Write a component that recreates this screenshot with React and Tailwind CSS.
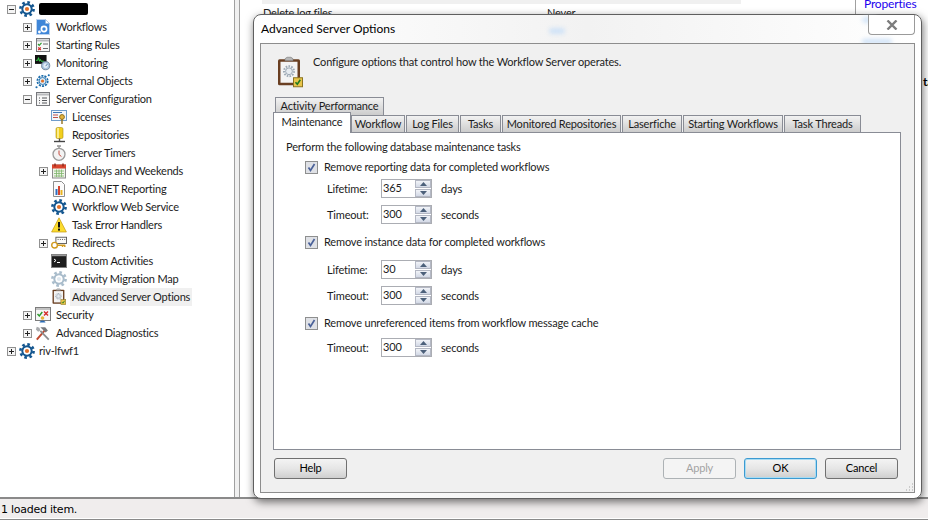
import React from "react";

const Gear = ({ size = 16, color = "#14568f", hub = "#e0702a" }) => (
  <svg width={size} height={size} viewBox="0 0 16 16">
    <circle cx="8" cy="8" r="6.6" fill="none" stroke={color} strokeWidth="2.6" strokeDasharray="2.6 2.6" />
    <circle cx="8" cy="8" r="4.6" fill="none" stroke={color} strokeWidth="2.2" />
    <circle cx="8" cy="8" r="3.4" fill="#fff" />
    <circle cx="8" cy="8" r="2.1" fill={hub} />
  </svg>
);

const DocGear = () => (
  <svg width="16" height="16" viewBox="0 0 16 16">
    <path d="M1.5 0.5h9l4 4v11h-13z" fill="#3f86d8" stroke="#bcd3ee" />
    <path d="M10.5 0.5v4h4z" fill="#fff" stroke="#8fb2dc" strokeWidth="0.6" />
    <circle cx="9" cy="10" r="2.6" fill="none" stroke="#fff" strokeWidth="1.7" />
    <circle cx="4.4" cy="13" r="1.4" fill="#fff" />
  </svg>
);

const ListWindow = ({ children }) => (
  <svg width="16" height="16" viewBox="0 0 16 16">
    <rect x="1.5" y="1.5" width="13" height="13" fill="#f7f7f7" stroke="#77787c" />
    <path d="M2 3.5h12" stroke="#b9babd" strokeWidth="2" />
    {children}
  </svg>
);

const RulesIcon = () => (
  <ListWindow>
    <path d="M3 7l1.2 1.3L6.5 5.8" fill="none" stroke="#2c9a2c" strokeWidth="1.2" />
    <path d="M3.2 10.4l2.6 2.6M5.8 10.4l-2.6 2.6" stroke="#d42a2a" strokeWidth="1.2" />
    <path d="M8 7h5M8 11.5h5" stroke="#66686c" />
  </ListWindow>
);

const ConfigIcon = () => (
  <ListWindow>
    <path d="M4 7h1M7 7h5M4 9.5h1M7 9.5h5M4 12h1M7 12h5" stroke="#55575b" />
  </ListWindow>
);

const MonitorIcon = () => (
  <svg width="18" height="18" viewBox="0 0 18 18">
    <rect x="0" y="0" width="13" height="10" fill="#111" />
    <path d="M1 6h2l1-3 1 4 1-2 1 2h3" fill="none" stroke="#35d04a" strokeWidth="1.1" />
    <circle cx="12" cy="12" r="4.6" fill="#a9c4de" stroke="#6b7f94" />
    <circle cx="12" cy="12" r="2.6" fill="#e4eef7" />
    <path d="M12 12l2-1.4" stroke="#2d5d8e" />
  </svg>
);

const ExternalIcon = () => (
  <svg width="18" height="18" viewBox="0 0 18 18">
    <circle cx="8.5" cy="9" r="5.8" fill="none" stroke="#1b6cab" strokeWidth="2" strokeDasharray="2.4 1.2" />
    <circle cx="8.5" cy="9" r="4" fill="#d9e8f4" stroke="#1b6cab" />
    <circle cx="8.5" cy="9" r="1.8" fill="#e0702a" />
    <circle cx="15.5" cy="2.5" r="1.2" fill="#1b6cab" />
    <circle cx="1.7" cy="16" r="1.2" fill="#1b6cab" />
  </svg>
);

const LicenseIcon = () => (
  <svg width="16" height="16" viewBox="0 0 16 16">
    <rect x="0.5" y="1.5" width="15" height="10" fill="#f3f7fc" stroke="#6f9ccc" />
    <path d="M2 3.5h9" stroke="#3f77b5" />
    <path d="M2 6h5M2 8.5h5" stroke="#c0524a" />
    <circle cx="11" cy="8" r="2.4" fill="#e3b541" stroke="#93701c" />
    <path d="M11 10v5" stroke="#93701c" strokeWidth="1.4" />
  </svg>
);

const RepoIcon = () => (
  <svg width="16" height="16" viewBox="0 0 16 16">
    <rect x="5" y="0.5" width="7" height="11" rx="1.5" fill="#f2cf1d" stroke="#a98d10" strokeWidth="0.6" />
    <rect x="6" y="1" width="2" height="10" fill="#fbeb8b" />
    <path d="M8.5 11.5v2.5" stroke="#555" strokeWidth="1.4" />
    <path d="M3 14.5h11" stroke="#444" strokeWidth="1.4" />
  </svg>
);

const TimerIcon = () => (
  <svg width="16" height="16" viewBox="0 0 16 16">
    <path d="M6 1h4" stroke="#888" strokeWidth="1.4" />
    <path d="M8 1v2" stroke="#999" strokeWidth="1.4" />
    <circle cx="8" cy="9.3" r="6" fill="#f3f3f3" stroke="#9a9a9a" strokeWidth="1.3" />
    <path d="M8 5.5v4l2.4 2" fill="none" stroke="#c0392b" strokeWidth="0.9" />
  </svg>
);

const CalendarIcon = () => (
  <svg width="16" height="16" viewBox="0 0 16 16">
    <rect x="1.5" y="2" width="13" height="13" fill="#eef3e8" stroke="#8c8c8c" />
    <rect x="1" y="1.5" width="14" height="4" fill="#d9452e" />
    <path d="M4 0.5v3M12 0.5v3" stroke="#8d2a1a" strokeWidth="1.4" />
    <path d="M3 8h10M3 10.5h10M3 13h10M5.5 6.5v7.5M8 6.5v7.5M10.5 6.5v7.5" stroke="#7db56b" strokeWidth="0.8" />
  </svg>
);

const ReportIcon = () => (
  <svg width="16" height="16" viewBox="0 0 16 16">
    <path d="M2.5 0.5h8l3 3v12h-11z" fill="#fbfbfb" stroke="#8d8d8d" />
    <rect x="4.5" y="8" width="2" height="6" fill="#2f6fc0" />
    <rect x="7" y="5" width="2" height="9" fill="#d6452f" />
    <rect x="9.5" y="9" width="2" height="5" fill="#e9b320" />
  </svg>
);

const WarnIcon = () => (
  <svg width="16" height="16" viewBox="0 0 16 16">
    <path d="M8 0.8L15.4 15H0.6z" fill="#fbdc2e" stroke="#c49a12" strokeWidth="0.7" />
    <path d="M8 5v5.4" stroke="#111" strokeWidth="2" />
    <rect x="7" y="11.6" width="2" height="2" fill="#111" />
  </svg>
);

const KeyIcon = () => (
  <svg width="18" height="16" viewBox="0 0 18 16">
    <rect x="5.5" y="1.5" width="12" height="7" fill="#fafafa" stroke="#555" />
    <path d="M7.5 4h1M10 4h1M12.5 4h1M15 4h1" stroke="#333" />
    <circle cx="4" cy="10.5" r="3.2" fill="#fff" stroke="#d19a1e" strokeWidth="1.6" />
    <path d="M7 10.5h9M13 10.5v2M15.5 10.5v2" stroke="#d19a1e" strokeWidth="1.6" />
  </svg>
);

const TerminalIcon = () => (
  <svg width="16" height="16" viewBox="0 0 16 16">
    <rect x="0.5" y="1.5" width="15" height="13" fill="#1e1e1e" stroke="#808080" />
    <path d="M1 2.5h14" stroke="#9a9a9a" strokeWidth="1.4" />
    <path d="M3 6l2 1.5L3 9" fill="none" stroke="#fff" />
    <path d="M6 9.5h3" stroke="#fff" />
  </svg>
);

const ClipboardIcon = ({ size = 16 }) => (
  <svg width={size} height={size * 1.25} viewBox="0 0 26 32">
    <rect x="1" y="3" width="22" height="26" rx="1.5" fill="#6a3f22" />
    <rect x="3.5" y="5.5" width="17" height="21" fill="#f4f4f4" />
    <path d="M8 4.5h8v-2l-2-1.5h-4l-2 1.5z" fill="#b6b6b6" stroke="#777" strokeWidth="0.6" />
    <circle cx="12" cy="15" r="5" fill="none" stroke="#9da9b5" strokeWidth="2" strokeDasharray="1.6 1.2" />
    <circle cx="12" cy="15" r="3.4" fill="#e6ebf0" stroke="#9da9b5" />
    <rect x="16.5" y="21.5" width="9" height="9" fill="#e8c44a" stroke="#8b7420" />
    <path d="M18.5 26l1.8 2 3-4.5" fill="none" stroke="#1f7a1f" strokeWidth="1.6" />
  </svg>
);

const SecurityIcon = () => (
  <svg width="16" height="16" viewBox="0 0 16 16">
    <rect x="0.5" y="0.5" width="15" height="13" fill="#f6f6f6" stroke="#7c7c7c" />
    <path d="M1 2h14" stroke="#b5b5b5" strokeWidth="1.6" />
    <path d="M2.5 7l1.8 2 3-4" fill="none" stroke="#2a9a2a" strokeWidth="1.4" />
    <path d="M9 4.5l4 4M13 4.5l-4 4" stroke="#d32b2b" strokeWidth="1.4" />
    <circle cx="7.5" cy="11" r="1.8" fill="#e5b23b" />
    <path d="M4.5 15.5c0-2.4 6-2.4 6 0z" fill="#2b6cb5" />
  </svg>
);

const ToolsIcon = () => (
  <svg width="18" height="17" viewBox="0 0 18 17">
    <path d="M2 15.5L11 5" stroke="#c0492f" strokeWidth="2.2" />
    <path d="M6 1.5l6 6 2.5-2.5-3-3.5z" fill="#77797c" />
    <path d="M15.5 15.5L6 5.5" stroke="#8b8d90" strokeWidth="2" />
    <path d="M2 1l3 1 1 3-2.5 1.5L1 4z" fill="#a9abae" />
  </svg>
);

const treeItems = [
  { level: 0, open: true, icon: <Gear />, redacted: true },
  { level: 1, plus: true, icon: <DocGear />, label: "Workflows" },
  { level: 1, plus: true, icon: <RulesIcon />, label: "Starting Rules" },
  { level: 1, plus: true, icon: <MonitorIcon />, label: "Monitoring" },
  { level: 1, plus: true, icon: <ExternalIcon />, label: "External Objects" },
  { level: 1, open: true, icon: <ConfigIcon />, label: "Server Configuration" },
  { level: 2, icon: <LicenseIcon />, label: "Licenses" },
  { level: 2, icon: <RepoIcon />, label: "Repositories" },
  { level: 2, icon: <TimerIcon />, label: "Server Timers" },
  { level: 2, plus: true, icon: <CalendarIcon />, label: "Holidays and Weekends" },
  { level: 2, icon: <ReportIcon />, label: "ADO.NET Reporting" },
  { level: 2, icon: <Gear />, label: "Workflow Web Service" },
  { level: 2, icon: <WarnIcon />, label: "Task Error Handlers" },
  { level: 2, plus: true, icon: <KeyIcon />, label: "Redirects" },
  { level: 2, icon: <TerminalIcon />, label: "Custom Activities" },
  { level: 2, icon: <Gear color="#a9bccb" hub="#dfe8ef" />, label: "Activity Migration Map" },
  { level: 2, icon: <ClipboardIcon size={14} />, label: "Advanced Server Options", selected: true },
  { level: 1, plus: true, icon: <SecurityIcon />, label: "Security" },
  { level: 1, plus: true, icon: <ToolsIcon />, label: "Advanced Diagnostics" },
  { level: 0, plus: true, icon: <Gear />, label: "riv-lfwf1" },
];

const levelClass = ["pl-[7px]", "pl-[23px]", "pl-[39px]"];

const Expander = ({ open, plus }) => {
  if (!open && !plus) return <span className="w-[9px] h-[9px] shrink-0" />;
  return (
    <svg width="9" height="9" viewBox="0 0 9 9" className="shrink-0">
      <rect x="0.5" y="0.5" width="8" height="8" fill="#f4f4f4" stroke="#919191" />
      <path d="M2 4.5h5" stroke="#222" />
      {plus && <path d="M4.5 2v5" stroke="#222" />}
    </svg>
  );
};

const TreeRow = ({ item }) => (
  <div className={`flex items-center h-[18px] ${levelClass[item.level]}`}>
    <Expander open={item.open} plus={item.plus} />
    <span className="w-[16px] h-[16px] ml-[3px] shrink-0 flex items-center justify-center">{item.icon}</span>
    {item.redacted ? (
      <span className="ml-[4px] w-[49px] h-[12px] rounded-[2px] bg-black" />
    ) : (
      <span
        className={`whitespace-nowrap leading-[18px] tracking-[-0.2px] ${item.level === 0 ? "ml-[4px]" : "ml-[3px] px-[2px]"} ${
          item.selected ? "bg-[#f0f0f0]" : ""
        }`}
      >
        {item.label}
      </span>
    )}
  </div>
);

const tabs = [
  { label: "Workflow", width: "w-[54px]" },
  { label: "Log Files", width: "w-[53px]" },
  { label: "Tasks", width: "w-[41px]" },
  { label: "Monitored Repositories", width: "w-[119px]" },
  { label: "Laserfiche", width: "w-[60px]" },
  { label: "Starting Workflows", width: "w-[100px]" },
  { label: "Task Threads", width: "w-[77px]" },
];

const tabClass =
  "flex items-center justify-center whitespace-nowrap border border-[#898c95] border-b-0 bg-gradient-to-b from-[#f2f2f2] to-[#cccccc]";

const CheckRow = ({ label, className }) => (
  <div className={`flex items-center h-[16px] pl-[31px] ${className}`}>
    <span className="w-[13px] h-[13px] border border-[#8e8f8f] bg-[#dfe1e6] flex items-center justify-center">
      <svg width="11" height="11" viewBox="0 0 11 11">
        <path d="M2.5 5.5l2 3 4-6.5" fill="none" stroke="#4a6199" strokeWidth="1.7" />
      </svg>
    </span>
    <span className="ml-[6px] whitespace-nowrap">{label}</span>
  </div>
);

const Spinner = ({ value }) => (
  <div className="flex w-[51px] h-[19px] border border-[#abadb3] bg-white">
    <span className="flex-1 pl-[1px] leading-[15px]">{value}</span>
    <div className="w-[16px] flex flex-col gap-px">
      <span className="h-[8px] flex items-center justify-center bg-gradient-to-b from-[#f2f4f8] to-[#d3d9e6] border border-[#b4b8c4]">
        <svg width="7" height="4" viewBox="0 0 7 4"><path d="M3.5 0L7 4H0z" fill="#4c607a" /></svg>
      </span>
      <span className="h-[8px] flex items-center justify-center bg-gradient-to-b from-[#f2f4f8] to-[#d3d9e6] border border-[#b4b8c4]">
        <svg width="7" height="4" viewBox="0 0 7 4"><path d="M0 0h7L3.5 4z" fill="#4c607a" /></svg>
      </span>
    </div>
  </div>
);

const Field = ({ label, value, unit, className }) => (
  <div className={`flex items-center h-[19px] pl-[53px] ${className}`}>
    <span className="w-[54px] pt-px">{label}</span>
    <Spinner value={value} />
    <span className="ml-[9px] pt-px">{unit}</span>
  </div>
);

const btnClass =
  "w-[73px] h-[21px] rounded-[3px] flex items-center justify-center border bg-gradient-to-b from-[#f4f4f4] via-[#e6e6e6] to-[#cfcfcf]";

export default function App() {
  return (
    <div className="relative flex flex-col w-[928px] h-[521px] overflow-hidden bg-white text-[#1c1c1c] text-[11px] tracking-[-0.17px] font-['Lato',sans-serif]">
      <div className="flex h-[499px] border-b-2 border-[#8a8a8a]">
        {/* tree */}
        <div className="w-[234px] shrink-0 bg-white">
          {treeItems.map((item, i) => (
            <TreeRow key={i} item={item} />
          ))}
        </div>
        {/* splitter */}
        <div className="w-[6px] shrink-0 bg-[#f0f0f0] border-x border-[#a0a0a0]" />
        {/* list behind the dialog */}
        <div className="flex-1 flex">
          <div className="flex-1 pl-[22px]">
            <div className="w-[479px] h-[4px] bg-[#f0f0f0]" />
            <div className="flex h-[16px] items-center mt-px">
              <span className="w-[285px] pl-[1px]">Delete log files</span>
              <span>Never</span>
            </div>
          </div>
          <div className="w-[73px] border-l border-[#a0a0a0] pl-[8px] h-[14px] leading-[8px] text-[12px] text-[#2200ee]">
            Properties
          </div>
        </div>
      </div>
      {/* status bar */}
      <div className="h-[19px] bg-[#f0eded] pl-[1px] text-[11px] tracking-[-0.25px] leading-[21px] text-black font-['DejaVu_Sans',sans-serif]">
        1 loaded item.
      </div>
      <div className="h-px mt-px bg-[#8a8a8a]" />

      <span className="absolute left-[923px] top-[73px] text-[12px] font-bold text-black">ta</span>

      {/* dialog */}
      <div className="absolute left-[253px] top-[14px] w-[669px] h-[485px] rounded-[8px] border border-[#5f5f5f] bg-gradient-to-r from-white via-[#f2f2f2] to-white shadow-[1px_3px_8px_rgba(0,0,0,0.55)] px-[6px] pb-[5px] flex flex-col">
        <div className="h-[28px] shrink-0 flex items-center pl-[1px] text-[12px] tracking-normal text-black">Advanced Server Options</div>
        {/* what shows through the glass */}
        <span className="absolute left-[295px] top-[13px] w-[16px] h-[6px] rounded-full bg-[#cfe2f7] blur-[2px]" />
        <span className="absolute left-[608px] top-[2px] w-[16px] h-[6px] rounded-full bg-[#d5e6f8] blur-[2px]" />
        <span className="absolute left-[608px] top-[24px] w-[30px] h-[5px] rounded-full bg-[#cfe2f7] blur-[2px]" />
        <button className="absolute right-[6px] top-0 w-[47px] h-[20px] rounded-b-[4px] border border-t-0 border-[#9a9a9a] bg-white flex items-center justify-center">
          <svg width="12" height="10" viewBox="0 0 12 10">
            <path d="M1.5 0.5l9 9M10.5 0.5l-9 9" stroke="#7c7c7c" strokeWidth="2.4" />
          </svg>
        </button>

        <div className="relative flex-1 border border-[#8d8d8d] bg-[#f0f0f0] flex flex-col">
          <div className="h-[53px] shrink-0 flex items-start pl-[16px] pt-[12px]">
            <ClipboardIcon size={26} />
            <span className="ml-[10px] -mt-[2px] leading-[16px]">Configure options that control how the Workflow Server operates.</span>
          </div>

          <div className={`${tabClass} ml-[14px] w-[109px] h-[18px]`}>Activity Performance</div>
          <div className="flex items-end h-[17px] ml-[12px] relative z-10">
            <div className="w-[78px] h-[21px] -mb-px -mr-px pb-[2px] flex items-center justify-center bg-white border border-[#898c95] border-b-0">
              Maintenance
            </div>
            {tabs.map((tab) => (
              <div key={tab.label} className={`${tabClass} ${tab.width} h-[17px] ml-px`}>
                {tab.label}
              </div>
            ))}
          </div>

          <div className="ml-[12px] w-[628px] h-[318px] border border-[#898c95] bg-white">
            <div className="h-[16px] mt-[6px] pl-[12px] flex items-center">Perform the following database maintenance tasks</div>
            <CheckRow className="mt-[4px]" label="Remove reporting data for completed workflows" />
            <Field className="mt-[4px]" label="Lifetime:" value="365" unit="days" />
            <Field className="mt-[7px]" label="Timeout:" value="300" unit="seconds" />
            <CheckRow className="mt-[10px]" label="Remove instance data for completed workflows" />
            <Field className="mt-[10px]" label="Lifetime:" value="30" unit="days" />
            <Field className="mt-[7px]" label="Timeout:" value="300" unit="seconds" />
            <CheckRow className="mt-[10px]" label="Remove unreferenced items from workflow message cache" />
            <Field className="mt-[7px]" label="Timeout:" value="300" unit="seconds" />
          </div>

          <div className="flex mt-[8px] pl-[13px] text-black">
            <button className={`${btnClass} border-[#707070]`}>Help</button>
            <button className="ml-[316px] w-[73px] h-[21px] rounded-[3px] border border-[#adb2b5] bg-[#f4f4f4] text-[#a3a3a3]">Apply</button>
            <button className={`${btnClass} ml-[8px] border-[#3c9ad1] shadow-[inset_0_0_0_1px_#a8dcf3]`}>OK</button>
            <button className={`${btnClass} ml-[8px] border-[#707070]`}>Cancel</button>
          </div>

          <svg width="9" height="9" viewBox="0 0 9 9" className="absolute right-0 bottom-0">
            <path d="M7 1h1M7 4h1M4 4h1M7 7h1M4 7h1M1 7h1" stroke="#a5a5a5" />
          </svg>
        </div>
      </div>
    </div>
  );
}
